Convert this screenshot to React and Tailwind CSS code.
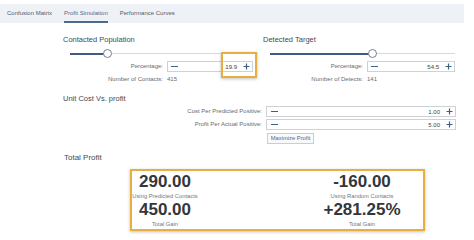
import React from 'react';

const Minus = () => <span className="block w-[7px] h-[1.5px] bg-[#3b5f86]" />;

const Plus = () => (
  <svg width="7" height="7" viewBox="0 0 7 7" className="block">
    <path d="M3.5 0.5v6M0.5 3.5h6" stroke="#3b5f86" strokeWidth="1.2" />
  </svg>
);

const Stepper = ({ value, width, padLeft = 'pl-[3px]' }) => (
  <div
    className={`flex items-center h-[11px] border border-[#cdd2d7] bg-white ${padLeft} pr-[1px]`}
    style={{ width }}
  >
    <Minus />
    <span className="ml-auto text-[6px] leading-none text-[#3a3f44]">{value}</span>
    <span className="ml-[6px] mr-[1px]">
      <Plus />
    </span>
  </div>
);

const Slider = ({ width, pos }) => (
  <div className="relative h-[9px] ml-[7px] mt-[4px]" style={{ width }}>
    <div className="absolute top-[4px] left-0 right-0 h-[1px] bg-[#d5dade]" />
    <div className="absolute top-[3.5px] left-0 h-[2px] bg-[#3e5d82]" style={{ width: pos }} />
    <div
      className="absolute top-0 w-[9px] h-[9px] rounded-full bg-white border border-[#75828f]"
      style={{ left: pos - 4.5 }}
    />
  </div>
);

const Column = ({ title, pos, sliderWidth, value, inputWidth, countLabel, count }) => (
  <div>
    <div className="text-[7.5px] leading-[10px] text-[#45494e]">{title}</div>
    <Slider width={sliderWidth} pos={pos} />
    <div className="flex items-center mt-[3px]">
      <div className="w-[100px] text-right text-[6px] text-[#666b70]">Percentage:</div>
      <div className="ml-[4px]">
        <Stepper value={value} width={inputWidth} />
      </div>
    </div>
    <div className="flex items-center mt-[3px] h-[8px]">
      <div className="w-[100px] text-right text-[6px] text-[#666b70]">{countLabel}</div>
      <div className="ml-[4px] text-[6px] text-[#666b70]">{count}</div>
    </div>
  </div>
);

const Stat = ({ num, label }) => (
  <>
    <div className="text-[17px] leading-[18px] font-bold text-[#33373b] whitespace-nowrap">{num}</div>
    <div className="text-[5.8px] leading-[10px] text-[#72767a] whitespace-nowrap">{label}</div>
  </>
);

export default function App() {
  return (
    <div
      className="relative w-[474px] h-[240px] bg-white overflow-hidden"
      style={{ fontFamily: '"Liberation Sans", Arial, sans-serif' }}
    >
      <div className="mt-[4px] h-[19px] w-[464px] bg-[#eef2f7] flex pl-[7px] gap-[12px] text-[6px] text-[#555b62]">
        <div className="flex items-center h-full pt-[2px] border-b-2 border-transparent">Confusion Matrix</div>
        <div className="flex items-center h-full pt-[2px] border-b-2 border-[#4d6c8c] text-[#4a6b8c]">
          Profit Simulation
        </div>
        <div className="flex items-center h-full pt-[2px] border-b-2 border-transparent">Performance Curves</div>
      </div>

      <div className="pl-[63px]">
        <div className="grid grid-cols-[200px_200px] mt-[12px]">
          <Column
            title="Contacted Population"
            pos={37}
            sliderWidth={188}
            value="19.9"
            inputWidth={86}
            countLabel="Number of Contacts:"
            count="415"
          />
          <Column
            title="Detected Target"
            pos={102}
            sliderWidth={185}
            value="54.5"
            inputWidth={88}
            countLabel="Number of Detects:"
            count="141"
          />
        </div>

        <div className="mt-[11px] text-[7.5px] leading-[10px] text-[#45494e]">Unit Cost Vs. profit</div>
        <div className="flex items-center mt-[2px]">
          <div className="w-[199px] text-right text-[6px] text-[#666b70]">Cost Per Predicted Positive:</div>
          <div className="ml-[4px]">
            <Stepper value="1.00" width={190} padLeft="pl-[4px]" />
          </div>
        </div>
        <div className="flex items-center mt-[2px]">
          <div className="w-[199px] text-right text-[6px] text-[#666b70]">Profit Per Actual Positive:</div>
          <div className="ml-[4px]">
            <Stepper value="5.00" width={190} padLeft="pl-[4px]" />
          </div>
        </div>
        <div className="ml-[204px] mt-[3px] h-[11px] w-[47px] flex items-center justify-center border border-[#c2cfdc] bg-[#f7f9fb] text-[5.8px] text-[#4a6b8c]">
          Maximize Profit
        </div>

        <div className="mt-[9px] ml-[1px] text-[8px] leading-[10px] text-[#45494e]">Total Profit</div>
        <div className="mt-[6px] ml-[67px] w-[295px] h-[62px] border-2 border-[#e8ae3f] shadow-[0_1px_3px_rgba(0,0,0,0.25)] flex justify-between pt-[2px]">
          <div className="w-[66px] flex flex-col items-center">
            <Stat num="290.00" label="Using Predicted Contacts" />
            <Stat num="450.00" label="Total Gain" />
          </div>
          <div className="w-[76px] mr-[23px] flex flex-col items-center">
            <Stat num="-160.00" label="Using Random Contacts" />
            <Stat num="+281.25%" label="Total Gain" />
          </div>
        </div>
      </div>

      <div className="absolute left-[221px] top-[52px] w-[36px] h-[26px] border-2 border-[#e8ae3f] shadow-[0_1px_3px_rgba(0,0,0,0.25)]" />
    </div>
  );
}
